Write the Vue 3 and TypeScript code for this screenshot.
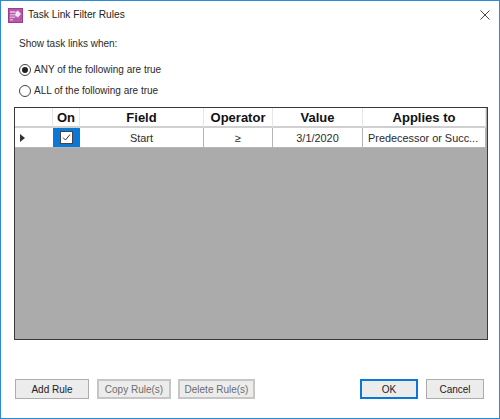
<script setup lang="ts">
interface Col { label: string; value: string; cls: string }
const columns: Col[] = [
  { label: 'On', value: '', cls: 'on' },
  { label: 'Field', value: 'Start', cls: '' },
  { label: 'Operator', value: '≥', cls: '' },
  { label: 'Value', value: '3/1/2020', cls: '' },
  { label: 'Applies to', value: 'Predecessor or Succ...', cls: 'applies' },
]
</script>

<template>
  <div class="window">
    <div class="titlebar">
      <svg class="app-icon" width="15" height="15" viewBox="0 0 15 15">
        <rect width="15" height="15" fill="#9c3c96" />
        <rect x="1" y="1" width="13" height="13" fill="#b65aa8" />
        <path d="M2 3h5v2H2zM2 6h6v1.5H2zM2 8.5h5V10H2zM2 11h3v1.5H2z" fill="#dcaed6" />
        <path d="M7.5 3.5h2V2l3.5 4-3.5 4V8.5h-2z" fill="#f3e3f1" />
      </svg>
      <span class="title">Task Link Filter Rules</span>
      <svg class="close" width="10" height="10" viewBox="0 0 10 10">
        <path d="M0.5 0.5l9 9M9.5 0.5l-9 9" stroke="#333" stroke-width="0.9" fill="none" />
      </svg>
    </div>

    <div class="body">
      <div class="prompt">Show task links when:</div>
      <div class="radio-row first">
        <span class="radio checked"><span class="dot"></span></span>
        <span>ANY of the following are true</span>
      </div>
      <div class="radio-row second">
        <span class="radio"></span>
        <span>ALL of the following are true</span>
      </div>

      <div class="grid">
        <div class="table">
          <div class="head corner"></div>
          <div v-for="c in columns" :key="c.label" class="head">{{ c.label }}</div>
          <div class="cell rowhead">
            <span class="arrow"></span>
          </div>
          <div
            v-for="c in columns"
            :key="c.label + 'v'"
            class="cell"
            :class="c.cls"
          >
            <span v-if="c.cls === 'on'" class="check">
              <svg width="11" height="11" viewBox="0 0 11 11">
                <path d="M2 5.5l2.5 2.5L9 2.5" stroke="#333" stroke-width="1" fill="none" />
              </svg>
            </span>
            <template v-else>{{ c.value }}</template>
          </div>
        </div>
      </div>

      <div class="actions">
        <div class="left">
          <button class="btn">Add Rule</button>
          <button class="btn disabled">Copy Rule(s)</button>
          <button class="btn disabled delete">Delete Rule(s)</button>
        </div>
        <div class="right">
          <button class="btn main primary">OK</button>
          <button class="btn main">Cancel</button>
        </div>
      </div>
    </div>
  </div>
</template>

<style>
html, body { margin: 0; background: #fff; }
</style>

<style scoped>
.window {
  box-sizing: border-box;
  width: 500px;
  height: 419px;
  border: 1px solid #2b8ad6;
  background: #fff;
  font-family: "Liberation Sans", Arial, sans-serif;
  font-size: 10px;
  color: #2a2a2a;
  display: flex;
  flex-direction: column;
  overflow: hidden;
}
.titlebar {
  height: 28px;
  display: flex;
  align-items: center;
  padding: 0 9px 0 7px;
  flex: none;
}
.app-icon { flex: none; }
.title { margin-left: 5px; padding-bottom: 1px; font-size: 10.2px; color: #222; flex: 1; }
.body {
  flex: 1;
  display: flex;
  flex-direction: column;
  padding: 8px 10px 0 13px;
  min-height: 0;
}
.prompt { padding-left: 5px; height: 14px; line-height: 14px; }
.radio-row {
  display: flex;
  align-items: center;
  gap: 3px;
  height: 14px;
  line-height: 14px;
  padding-left: 5px;
}
.radio-row.first { margin-top: 12px; }
.radio-row.second { margin-top: 7px; }
.radio {
  box-sizing: border-box;
  width: 12px;
  height: 12px;
  border: 1px solid #444;
  border-radius: 50%;
  display: flex;
  align-items: center;
  justify-content: center;
  background: #fff;
}
.dot { width: 6px; height: 6px; border-radius: 50%; background: #222; }
.grid {
  box-sizing: border-box;
  margin-top: 9px;
  width: 474px;
  height: 233px;
  border: 1.5px solid #3a3a3a;
  background: #ababab;
  flex: none;
}
.table {
  display: grid;
  grid-template-columns: 38px 27px 124px 69px 90px 123px;
  grid-template-rows: 20px 20px;
}
.head {
  background: #fff;
  border-right: 1px solid #e6e6e6;
  border-bottom: 2px solid #d0d0d0;
  box-sizing: border-box;
  font-weight: bold;
  font-size: 13px;
  color: #111;
  display: flex;
  align-items: center;
  justify-content: center;
}
.cell {
  background: #fff;
  box-sizing: border-box;
  border-right: 1px solid #b5b5b5;
  border-bottom: 1px solid #b5b5b5;
  display: flex;
  align-items: center;
  justify-content: center;
  font-size: 10.9px;
}
.cell.rowhead { justify-content: flex-start; padding-left: 5px; border-right: none; }
.arrow {
  width: 0;
  height: 0;
  border-left: 5px solid #333;
  border-top: 4.5px solid transparent;
  border-bottom: 4.5px solid transparent;
}
.cell.on { background: #0a78d7; border-right: none; }
.check {
  box-sizing: border-box;
  width: 13px;
  height: 13px;
  background: #fff;
  border: 1px solid #444;
  display: flex;
  align-items: center;
  justify-content: center;
}
.cell.applies { justify-content: flex-start; padding-left: 5px; white-space: nowrap; }
.actions {
  display: flex;
  justify-content: space-between;
  margin-top: 39px;
  padding-left: 1px;
  padding-right: 5px;
}
.left, .right { display: flex; }
.left { gap: 8px; }
.right { gap: 8px; }
.btn {
  box-sizing: border-box;
  width: 74px;
  height: 20px;
  padding: 0;
  border: 1.5px solid #adadad;
  background: #ececec;
  font-family: "Liberation Sans", Arial, sans-serif;
  font-size: 10px;
  color: #222;
}
.btn.disabled { color: #6d6d6d; border-color: #c6c6c6; border-width: 2px; }
.btn.delete { width: 77px; margin-left: -1px; }
.btn.main { width: 58px; }
.btn.primary { border: 2px solid #0a78d7; }
</style>
